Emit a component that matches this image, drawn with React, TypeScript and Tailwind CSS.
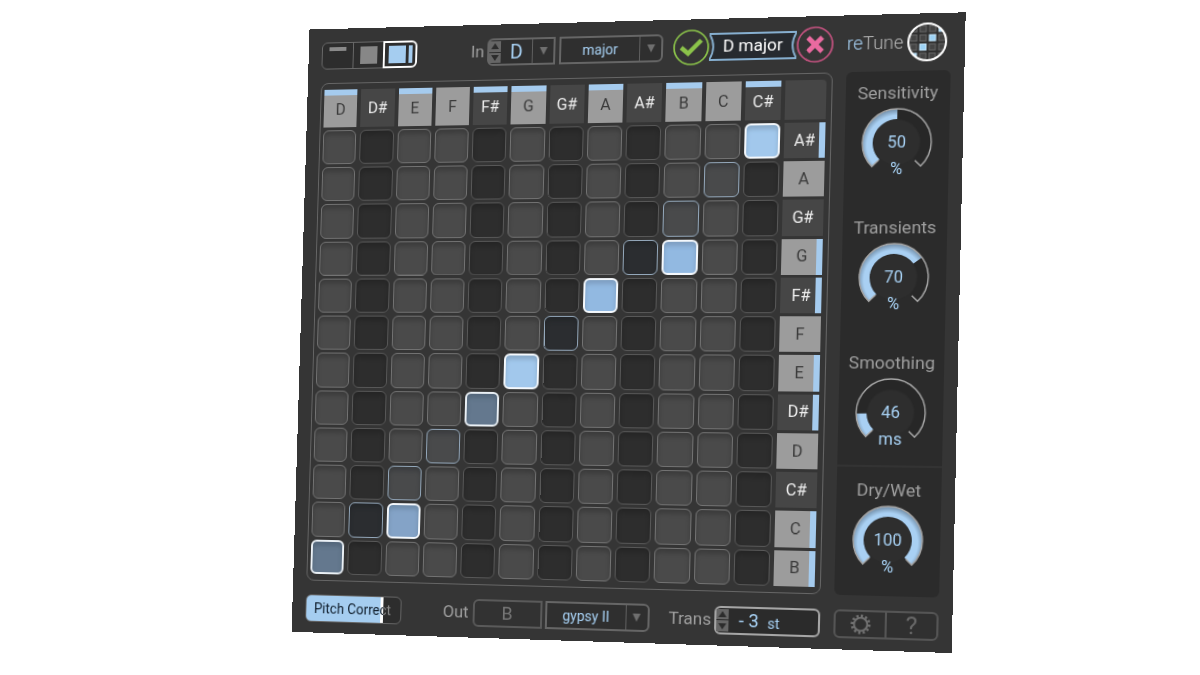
import { useState } from 'react'
import clsx from 'clsx'

type CellState = 'bright' | 'soft' | 'mid' | 'dim' | 'outline'

interface Note {
  name: string
  active: boolean
}

const COLUMNS: Note[] = [
  { name: 'D', active: true },
  { name: 'D#', active: false },
  { name: 'E', active: true },
  { name: 'F', active: false },
  { name: 'F#', active: true },
  { name: 'G', active: true },
  { name: 'G#', active: false },
  { name: 'A', active: true },
  { name: 'A#', active: false },
  { name: 'B', active: true },
  { name: 'C', active: false },
  { name: 'C#', active: true },
]

const ROWS: Note[] = [
  { name: 'A#', active: true },
  { name: 'A', active: false },
  { name: 'G#', active: false },
  { name: 'G', active: true },
  { name: 'F#', active: true },
  { name: 'F', active: false },
  { name: 'E', active: true },
  { name: 'D#', active: true },
  { name: 'D', active: false },
  { name: 'C#', active: false },
  { name: 'C', active: true },
  { name: 'B', active: true },
]

// keyed by "row-column"
const CELLS: Record<string, CellState> = {
  '0-11': 'bright',
  '1-10': 'outline',
  '2-9': 'outline',
  '3-8': 'outline',
  '3-9': 'soft',
  '4-7': 'soft',
  '5-6': 'outline',
  '6-5': 'bright',
  '7-4': 'dim',
  '8-3': 'outline',
  '9-2': 'outline',
  '10-1': 'outline',
  '10-2': 'mid',
  '11-0': 'dim',
}

const isSharp = (name: string) => name.endsWith('#')

function Stepper({ label }: { label: string }) {
  return (
    <span className="flex w-3 shrink-0 flex-col gap-px py-px">
      <button aria-label={`${label} up`} className="flex flex-1 items-center justify-center bg-[#666666]">
        <svg viewBox="0 0 8 6" className="h-1.5 w-2 fill-[#2c2c2c]"><path d="M4 0l4 6H0z" /></svg>
      </button>
      <button aria-label={`${label} down`} className="flex flex-1 items-center justify-center bg-[#666666]">
        <svg viewBox="0 0 8 6" className="h-1.5 w-2 fill-[#2c2c2c]"><path d="M4 6L0 0h8z" /></svg>
      </button>
    </span>
  )
}

function Arrow() {
  return (
    <span className="pointer-events-none absolute inset-y-0 right-0 flex w-[22px] items-center justify-center border-l border-[#606060]">
      <svg viewBox="0 0 8 8" className="size-2 fill-[#6f6f6f]"><path d="M4 8L0 0h8z" /></svg>
    </span>
  )
}

function ScaleSelect({ label, value, options }: { label: string; value: string; options: string[] }) {
  return (
    <span className="relative flex h-7 w-[105px] rounded-r-md border-2 border-[#666666] bg-[#2f2f2f]">
      <select
        aria-label={label}
        defaultValue={value}
        className="w-full appearance-none bg-transparent pr-[22px] text-center text-sm text-[#a8d2f5] outline-none [text-align-last:center]"
      >
        {options.map(o => <option key={o}>{o}</option>)}
      </select>
      <Arrow />
    </span>
  )
}

function point(r: number, deg: number) {
  const a = (deg * Math.PI) / 180
  return `${(r * Math.cos(a)).toFixed(2)} ${(r * Math.sin(a)).toFixed(2)}`
}

// ring segment, starting at the lower left and running clockwise
function band(outer: number, inner: number, fraction: number) {
  const end = 135 + 270 * fraction
  const large = 270 * fraction > 180 ? 1 : 0
  return `M${point(outer, 135)}A${outer} ${outer} 0 ${large} 1 ${point(outer, end)}L${point(inner, end)}A${inner} ${inner} 0 ${large} 0 ${point(inner, 135)}Z`
}

interface KnobProps {
  label: string
  value: number
  unit: string
  fraction: number
}

function Knob({ label, value, unit, fraction }: KnobProps) {
  const id = label.toLowerCase().replace('/', '-')
  return (
    <div className="flex flex-col items-center gap-0.5">
      <label htmlFor={id} className="text-[17px] leading-6 text-[#9f9f9f]">{label}</label>
      <div className="relative size-[70px]">
        <svg viewBox="-35 -35 70 70" className="size-full">
          <defs>
            <radialGradient id={`${id}-fill`} gradientUnits="userSpaceOnUse" cx="0" cy="2" r="34">
              <stop offset="0.84" stopColor="#a9d0f3" />
              <stop offset="1" stopColor="#7896b2" />
            </radialGradient>
          </defs>
          <path d={band(33, 23, 1)} fill="#272727" />
          <circle r="22" fill="#2e2e2e" />
          <path d={band(33, 23, fraction)} fill={`url(#${id}-fill)`} />
          <path
            d={`M${point(24, 135)}L${point(33, 135)}A33 33 0 1 1 ${point(33, 45)}L${point(25, 45)}`}
            fill="none"
            stroke="#a6a6a6"
            strokeWidth="1.4"
          />
        </svg>
        <span className="absolute inset-x-0 top-[25px] text-center text-base leading-5 text-[#a8d2f5]">{value}</span>
        <span className="absolute inset-x-0 top-[51px] text-center text-base leading-5 text-[#a8d2f5]">{unit}</span>
        <input id={id} type="range" min={0} max={100} defaultValue={value} className="absolute inset-0 h-full w-full cursor-pointer opacity-0" />
      </div>
    </div>
  )
}

function NoteLabel({ note, side }: { note: Note; side: 'top' | 'right' }) {
  return (
    <button
      className={clsx(
        'flex items-center justify-center text-base',
        isSharp(note.name) ? 'bg-[#464646] text-[#eeeeee]' : 'bg-[#9c9c9c] text-[#3a3a3a]',
        note.active && side === 'top' && 'border-t-6 border-[#a5cbee] pb-1',
        note.active && side === 'right' && 'border-r-6 border-[#a5cbee] pl-1.5'
      )}
    >
      {note.name}
    </button>
  )
}

function GridCell({ sharp, state, label }: { sharp: boolean; state?: CellState; label: string }) {
  return (
    <button
      aria-label={label}
      className={clsx(
        'rounded-md',
        !state && !sharp && 'border border-[#737373] bg-[#4a4a4a] shadow-[inset_0_4px_4px_#3c3c3c]',
        !state && sharp && 'border border-[#585858] bg-[#2d2d2d] shadow-[inset_0_4px_4px_#262626]',
        state === 'outline' && !sharp && 'border border-[#94a8bb] bg-[#494a4b] shadow-[inset_0_4px_4px_#3b3d3f]',
        state === 'outline' && sharp && 'border border-[#94a8bb] bg-[#2b2d30] shadow-[inset_0_4px_4px_#24272a]',
        state === 'bright' && 'border-2 border-[#f4f8fc] bg-[#a2c8ec] shadow-[inset_0_4px_4px_#8aabca]',
        state === 'soft' && 'border-2 border-[#f4f8fc] bg-[#92b9e1] shadow-[inset_0_4px_4px_#7f9fc2]',
        state === 'mid' && 'border-2 border-[#f4f8fc] bg-[#84a3c7] shadow-[inset_0_4px_4px_#6f8caa]',
        state === 'dim' && 'border-2 border-[#eaf0f5] bg-[#64788e] shadow-[inset_0_4px_4px_#54677b]'
      )}
    />
  )
}

function NoteGrid() {
  return (
    <div className="grid min-w-0 flex-1 grid-cols-[repeat(12,minmax(0,1fr))_40px] grid-rows-[39px_repeat(12,minmax(0,1fr))] gap-x-1 gap-y-[3px] rounded-lg border border-[#666666] pt-1.5 pr-[5px] pb-1.5 pl-[3px]">
      {COLUMNS.map(c => <NoteLabel key={c.name} note={c} side="top" />)}
      <span className="rounded-tr bg-[#464646]" />
      {ROWS.map((row, r) => [
        ...COLUMNS.map((col, c) => (
          <GridCell
            key={`${r}-${c}`}
            sharp={isSharp(col.name)}
            state={CELLS[`${r}-${c}`]}
            label={`${col.name} to ${row.name}`}
          />
        )),
        <NoteLabel key={`label-${r}`} note={row} side="right" />,
      ])}
    </div>
  )
}

function Logo() {
  const steps = [-13, -4, 5, 14]
  return (
    <svg viewBox="-20 -20 40 40" className="size-10 shrink-0">
      <defs>
        <clipPath id="logo-clip"><circle r="18" /></clipPath>
      </defs>
      <circle r="18" fill="#2e2e2e" />
      <g clipPath="url(#logo-clip)">
        {steps.map((y, j) => steps.map((x, i) => {
          const lit = i + j === 3
          return (
            <rect
              key={`${x},${y}`}
              x={x - 3}
              y={y - 3}
              width="6"
              height="6"
              fill={lit ? '#9cd2f5' : '#444444'}
              stroke={lit ? '#c6e6fa' : '#666666'}
            />
          )
        }))}
      </g>
      <circle r="18" fill="none" stroke="#ffffff" strokeWidth="2" />
    </svg>
  )
}

function ViewSwitch() {
  const [view, setView] = useState(2)
  const frame = (i: number) => (view === i ? 'border-2 border-white' : 'border border-[#6a6a6a]')
  return (
    <div className="flex h-7 w-[101px] rounded-md bg-[#2d2d2d]">
      <button aria-label="Compact view" onClick={() => setView(0)} className={clsx('flex flex-1 justify-center rounded-l-md pt-1', frame(0))}>
        <span className="h-1 w-[18px] bg-[#8a8a8a]" />
      </button>
      <button aria-label="Medium view" onClick={() => setView(1)} className={clsx('-ml-px flex flex-1 items-center justify-center', frame(1))}>
        <span className="size-[18px] bg-[#878787]" />
      </button>
      <button aria-label="Full view" onClick={() => setView(2)} className={clsx('-ml-px flex flex-1 items-center justify-center gap-[3px] rounded-r-md', frame(2))}>
        <span className="size-[18px] bg-[#a5cdf0]" />
        <span className="h-[18px] w-1 bg-[#a5cdf0]" />
      </button>
    </div>
  )
}

function ScaleConfirm() {
  return (
    <div className="ml-2.5 flex items-center">
      <button aria-label="Accept" className="size-9">
        <svg viewBox="0 0 36 36" className="size-full" fill="none">
          <circle cx="18" cy="18" r="17" stroke="#8bc34a" strokeWidth="1.7" />
          <path d="M8 18l7 6 13-13" stroke="#8bc34a" strokeWidth="4.4" />
        </svg>
      </button>
      <span className="relative flex h-7 w-[86px] items-center justify-center text-[17px] text-white">
        <svg viewBox="0 0 86 28" preserveAspectRatio="none" className="absolute inset-0 size-full">
          <path d="M0 1H86Q78 14 86 27H0Q8 14 0 1Z" fill="#262a2f" stroke="#86afd0" strokeWidth="1.8" />
        </svg>
        <span className="relative">D major</span>
      </span>
      <button aria-label="Discard" className="size-9">
        <svg viewBox="0 0 36 36" className="size-full" fill="none">
          <circle cx="18" cy="18" r="17" stroke="#c2527f" strokeWidth="1.7" />
          <path d="M11 11l14 14M25 11L11 25" stroke="#ea6aa0" strokeWidth="4.8" />
        </svg>
      </button>
    </div>
  )
}

function TopBar() {
  return (
    <header className="flex h-7 items-center gap-[13px]">
      <div className="flex flex-1 items-center">
        <ViewSwitch />
        <label htmlFor="in-key" className="mr-[3px] ml-auto text-[17px] text-[#9f9f9f]">In</label>
        <span className="relative mr-1 flex h-7 w-[70px] rounded-l-md border-2 border-[#666666] bg-[#2f2f2f]">
          <Stepper label="In key" />
          <select
            id="in-key"
            defaultValue="D"
            className="w-full appearance-none bg-transparent pr-[22px] text-center text-xl leading-6 text-[#a8d2f5] outline-none [text-align-last:center]"
          >
            {COLUMNS.map(c => <option key={c.name}>{c.name}</option>)}
          </select>
          <Arrow />
        </span>
        <ScaleSelect label="In scale" value="major" options={['major', 'minor', 'gypsy II']} />
        <ScaleConfirm />
      </div>
      <div className="flex w-[100px] items-center gap-[3px]">
        <h1 className="text-lg font-light text-[#b5b5b5]"><span className="text-[#a8d2f5]">re</span>Tune</h1>
        <Logo />
      </div>
    </header>
  )
}

function BottomBar() {
  return (
    <footer className="flex h-7 items-center gap-[13px]">
      <div className="flex flex-1 items-center">
        <button className="h-7 w-[101px] rounded-md border border-[#666666] bg-[linear-gradient(to_right,#a5cdf0_79%,#ffffff_79%,#ffffff_82%,#2d2d2d_82%)] text-left">
          <span className="block bg-[linear-gradient(to_right,#0e1c2a_82%,#8a8a8a_82%)] bg-clip-text pl-2 text-sm whitespace-nowrap text-transparent">
            Pitch Correct
          </span>
        </button>
        <label htmlFor="out-key" className="mr-1 ml-auto text-[17px] text-[#9f9f9f]">Out</label>
        <input
          id="out-key"
          readOnly
          defaultValue="B"
          className="mr-[3px] h-7 w-[71px] rounded-l-md border-2 border-[#5a5a5a] bg-[#323232] text-center text-lg text-[#777777] outline-none"
        />
        <ScaleSelect label="Out scale" value="gypsy II" options={['major', 'minor', 'gypsy II']} />
        <label htmlFor="trans" className="mr-[3px] ml-[19px] text-[17px] text-[#9f9f9f]">Trans</label>
        <span className="flex h-7 w-[103px] items-center rounded-md border-2 border-[#a6a6a6] bg-[#2b2b2b]">
          <span className="flex h-full"><Stepper label="Trans" /></span>
          <input id="trans" defaultValue="- 3" className="ml-2.5 w-7 bg-transparent text-lg text-[#a8d2f5] outline-none" />
          <span className="pt-1 text-sm text-[#a8d2f5]">st</span>
        </span>
      </div>
      <div className="flex h-7 w-[100px] rounded-md border-2 border-[#555555] bg-[#303030]">
        <button aria-label="Settings" className="flex flex-1 items-center justify-center border-r-2 border-[#555555]">
          <svg viewBox="0 0 22 22" className="size-5" fill="none" stroke="#727272">
            <circle cx="11" cy="11" r="7" strokeWidth="2" />
            <circle cx="11" cy="11" r="9" strokeWidth="3" pathLength="24" strokeDasharray="1 1" />
          </svg>
        </button>
        <button aria-label="Help" className="flex flex-1 items-center justify-center text-2xl leading-6 text-[#686868]">?</button>
      </div>
    </footer>
  )
}

function Sidebar() {
  return (
    <aside className="flex w-[100px] shrink-0 flex-col rounded-md bg-[#2b2b2b]">
      <div className="flex flex-1 flex-col justify-between border-b-2 border-[#333333] pt-[9px] pb-4">
        <Knob label="Sensitivity" value={50} unit="%" fraction={0.5} />
        <Knob label="Transients" value={70} unit="%" fraction={0.7} />
        <Knob label="Smoothing" value={46} unit="ms" fraction={0.16} />
      </div>
      <div className="pt-2.5 pb-[19px]">
        <Knob label="Dry/Wet" value={100} unit="%" fraction={1} />
      </div>
    </aside>
  )
}

export default function App() {
  return (
    <main className="flex min-h-screen items-center justify-center overflow-hidden bg-white font-['Roboto',sans-serif]">
      {/* plugin window, tilted in space */}
      <section className="flex aspect-[33/31] w-full max-w-[661px] flex-col gap-3.5 bg-[#353535] pt-3.5 pr-[13px] pb-[11px] pl-3.5 [transform:translate(19px,-7px)_perspective(1100px)_rotateY(-5.9deg)_rotateX(0.9deg)_skew(-1.4deg,0.16deg)]">
        <TopBar />
        <div className="flex flex-1 gap-[13px]">
          <NoteGrid />
          <Sidebar />
        </div>
        <BottomBar />
      </section>
    </main>
  )
}
